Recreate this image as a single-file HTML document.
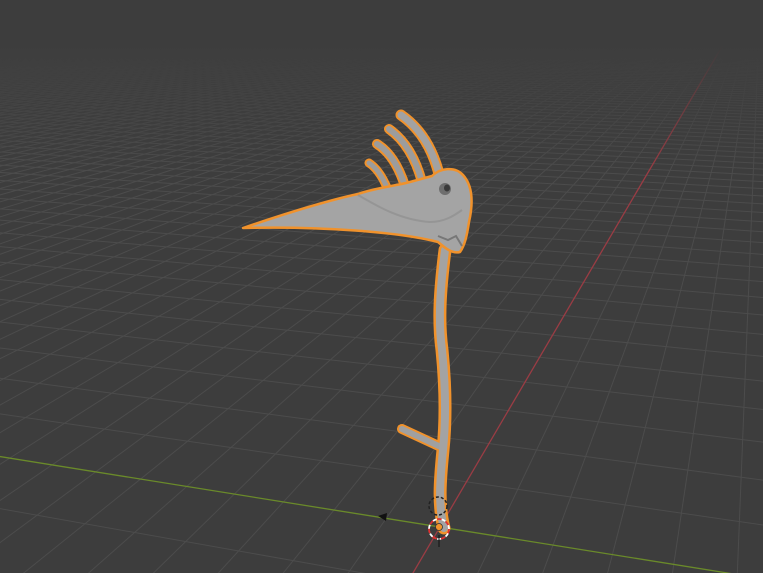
<!DOCTYPE html><html style="overflow:hidden"><head><style>html,body{margin:0;width:763px;height:573px;overflow:hidden;background:#3d3d3d}</style></head><body>
<svg id="s" width="763" height="573" viewBox="0 0 763 573" xmlns="http://www.w3.org/2000/svg" style="position:absolute;left:0;top:0;display:block">
<defs><linearGradient id="fade" x1="0" y1="0" x2="0" y2="1"><stop offset="0" stop-color="#3d3d3d" stop-opacity="1"/><stop offset="0.08" stop-color="#3d3d3d" stop-opacity="1"/><stop offset="0.3" stop-color="#3d3d3d" stop-opacity="0"/></linearGradient></defs>
<g id="grid"></g>
<rect width="763" height="573" fill="url(#fade)"/>
<g id="obj">
<g stroke-linecap="round" fill="none">
<path d="M369,163 Q380,170 388,190" stroke="#f0922c" stroke-width="9"/>
<path d="M377,144 Q395,155 405,186" stroke="#f0922c" stroke-width="10"/>
<path d="M389,129 Q412,145 422,182" stroke="#f0922c" stroke-width="10"/>
<path d="M401,115 Q430,135 440,178" stroke="#f0922c" stroke-width="11"/>
<path d="M369,163 Q380,170 388,190" stroke="#9c9c9c" stroke-width="5"/>
<path d="M377,144 Q395,155 405,186" stroke="#9c9c9c" stroke-width="6"/>
<path d="M389,129 Q412,145 422,182" stroke="#9c9c9c" stroke-width="6"/>
<path d="M401,115 Q430,135 440,178" stroke="#a2a2a2" stroke-width="7"/>
</g>
<g stroke-linecap="round" stroke-linejoin="round" fill="none">
<path d="M402,429 L443,448" stroke="#f0922c" stroke-width="10"/>
<path d="M445,250 C440,290 438,320 442,350 C446,390 446,420 443,450 C440,480 438,505 444,528" stroke="#f0922c" stroke-width="13"/>
<path d="M402,429 L443,448" stroke="#a0a0a0" stroke-width="6"/>
<path d="M445,250 C440,290 438,320 442,350 C446,390 446,420 443,450 C440,480 438,505 444,528" stroke="#a3a3a3" stroke-width="8"/>
</g>
<path d="M243,228 C290,212 330,200 358,194 C375,188 395,186 410,182 L432,176 C440,168 455,166 463,175 C472,185 474,200 469,222 C467,235 465,245 460,252 C452,254 445,248 438,242 C400,232 320,226 243,228 Z" fill="#a4a4a4" stroke="#f0922c" stroke-width="2.5" stroke-linejoin="round"/>
<path d="M358,195 C375,205 400,220 430,222 C445,222 455,215 462,210" fill="none" stroke="#8c8c8c" stroke-width="2" opacity="0.6"/>
<ellipse cx="445" cy="189" rx="6" ry="6" fill="#6e6e6e"/>
<ellipse cx="447" cy="188" rx="3" ry="3.5" fill="#3a3a3a"/>
<path d="M438,236 L448,240 L456,236 L462,246" fill="none" stroke="#777" stroke-width="2"/>
</g>
<circle cx="438" cy="506" r="9" fill="none" stroke="#222" stroke-width="1.5" stroke-dasharray="3 2"/>
<circle cx="439" cy="529" r="10" fill="none" stroke="#e03030" stroke-width="1.8" stroke-dasharray="5 4"/>
<circle cx="439" cy="529" r="10" fill="none" stroke="#fff" stroke-width="1.8" stroke-dasharray="4 5" stroke-dashoffset="4.5"/>
<line x1="439" y1="535" x2="439" y2="547" stroke="#111" stroke-width="1"/>
<circle cx="439" cy="527" r="3.5" fill="#f0922c" stroke="#333" stroke-width="0.8"/>
<path d="M378,516 L387,513 L386,521 Z" fill="#111"/>
</svg>
<script>
(function(){
var w1=0.09,w2=0.016;
function P(u,v){var d=1+w1*u+w2*v;return [(440+761*w1*u-2979*w2*v)/d,(527-20*w1*u-20*w2*v)/d,d];}
var g=document.getElementById('grid'),out='';
function line(fixU,c,lo,hi,color,wid){
 var pts=[],N=3000;
 for(var i=0;i<=N;i++){var t=lo+(hi-lo)*i/N;var p=fixU?P(c,t):P(t,c);if(p[2]>0.05&&p[0]>-60&&p[0]<830&&p[1]>-60&&p[1]<640)pts.push(p);}
 if(pts.length<2)return;
 out+='<line x1="'+pts[0][0].toFixed(1)+'" y1="'+pts[0][1].toFixed(1)+'" x2="'+pts[pts.length-1][0].toFixed(1)+'" y2="'+pts[pts.length-1][1].toFixed(1)+'" stroke="'+color+'" stroke-width="'+wid+'"/>';
}
for(var u=-10;u<=200;u++){if(u==0)continue;line(true,u,-80,400,'#4c4c4c',1);}
for(var v=-80;v<=400;v++){if(v==0)continue;line(false,v,-10,200,'#4c4c4c',1);}
line(false,0,-10,200,'#9a3c44',1.3);
line(true,0,-80,400,'#6a8a2a',1.3);
g.innerHTML=out;
})();
</script>
</body></html>
